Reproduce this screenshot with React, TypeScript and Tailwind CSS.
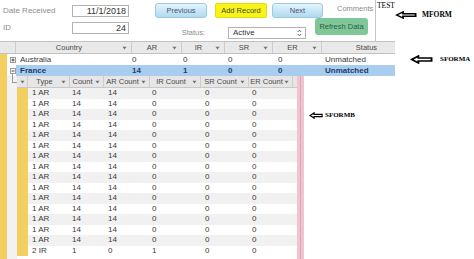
import React from "react";

const DD = () => (
  <svg width="5" height="4" viewBox="0 0 5 4" className="shrink-0">
    <path d="M0.5 0.8 L4.5 0.8 L2.5 3.4 Z" fill="#707070" />
  </svg>
);

const Arrow = ({ w, h }: { w: number; h: number }) => (
  <svg width={w} height={h} viewBox="0 0 22 10" preserveAspectRatio="none" className="shrink-0">
    <polygon
      points="1.6,5 8,1.2 8,3.4 20.6,3.4 20.6,6.6 8,6.6 8,8.8"
      fill="white"
      stroke="black"
      strokeWidth="1.8"
    />
  </svg>
);

const Expander = ({ minus }: { minus?: boolean }) => (
  <svg width="6" height="6" viewBox="0 0 6 6" className="shrink-0">
    <rect x="0.5" y="0.5" width="5" height="5" fill="white" stroke="#9a9a9a" />
    <line x1="1.5" y1="3" x2="4.5" y2="3" stroke="#444" />
    {!minus && <line x1="3" y1="1.5" x2="3" y2="4.5" stroke="#444" />}
  </svg>
);

const outerHeader = [
  { label: "Country", cls: "w-[116px]", dd: true },
  { label: "AR", cls: "w-[50px]", dd: true },
  { label: "IR", cls: "w-[43px]", dd: true },
  { label: "SR", cls: "w-[48px]", dd: true },
  { label: "ER", cls: "w-[49px]", dd: true },
  { label: "Status", cls: "w-[73px] pl-[20px]", dd: false },
];

const outerCells = [
  "w-[116px] pl-[4px]",
  "w-[50px] pl-0",
  "w-[43px] pl-[1px]",
  "w-[48px] pl-[3px]",
  "w-[49px] pl-[5px]",
  "w-[73px] pl-[3px]",
];

const innerCols = [
  { label: "Type", w: "w-[42px]", pad: "pl-[4px]" },
  { label: "Count", w: "w-[34px]", pad: "pl-[2px]" },
  { label: "AR Count", w: "w-[46px]", pad: "pl-[4px]" },
  { label: "IR Count", w: "w-[51px]", pad: "pl-[2px]" },
  { label: "SR Count", w: "w-[48px]", pad: "pl-[4px]" },
  { label: "ER Count", w: "w-[44px]", pad: "pl-[3px]" },
];

const innerRows: string[][] = [
  ...Array.from({ length: 15 }, () => ["1 AR", "14", "14", "0", "0", "0"]),
  ["2 IR", "1", "0", "1", "0", "0"],
];

export default function App() {
  return (
    <div className="w-[474px] h-[259px] overflow-hidden bg-white font-['Liberation_Sans',Arial,sans-serif] text-[#3a3a3a] flex flex-col">
      {/* MFORM */}
      <div className="h-[41px] flex shrink-0">
        <div className="w-[150px] flex flex-col pt-[5px] gap-[5px]">
          <div className="h-[12px] flex items-center">
            <span className="w-[72px] pl-[3px] text-[8px] text-[#8c8c8c] leading-none">Date Received</span>
            <div className="w-[57px] h-[12px] border border-[#b3b3b3] flex items-center justify-end pr-[2px] text-[9px] leading-none text-[#333]">
              11/1/2018
            </div>
          </div>
          <div className="h-[12px] flex items-center">
            <span className="w-[72px] pl-[3px] text-[8px] text-[#8c8c8c] leading-none">ID</span>
            <div className="w-[57px] h-[12px] border border-[#b3b3b3] flex items-center justify-end pr-[2px] text-[9px] leading-none text-[#333]">
              24
            </div>
          </div>
        </div>
        <div className="w-[226px] h-full border-r border-[#c4c4c4] flex flex-col">
          <div className="flex items-start pt-[3px] pl-[5px] h-[18px]">
            <button className="w-[52px] h-[15px] rounded-[3px] border border-[#9ccbe8] bg-gradient-to-b from-[#e4f3fb] to-[#b2d9f1] text-[7.5px] text-[#3d5a72] leading-none">
              Previous
            </button>
            <button className="ml-[8px] w-[52px] h-[15px] rounded-[2px] border border-[#e2dc10] bg-[#f8f419] text-[7.5px] text-[#4a4a30] leading-none">
              Add Record
            </button>
            <button className="ml-[5px] w-[51px] h-[15px] rounded-[3px] border border-[#9ccbe8] bg-gradient-to-b from-[#e4f3fb] to-[#b2d9f1] text-[7.5px] text-[#3d5a72] leading-none">
              Next
            </button>
            <span className="ml-[14px] mt-[1px] text-[7.5px] text-[#8c8c8c] leading-[10px]">Comments</span>
          </div>
          <div className="flex items-start">
            <span className="w-[55px] mt-[10px] text-right text-[7.5px] text-[#8c8c8c] leading-[9px]">Status:</span>
            <div className="ml-[23px] mt-[9px] w-[78px] h-[12px] border border-[#b3b3b3] flex items-center pl-[4px] pr-[3px] text-[8px] leading-none text-[#333]">
              <span className="flex-1">Active</span>
              <svg width="5" height="8" viewBox="0 0 5 8">
                <path d="M0.8 3 L2.5 1.2 L4.2 3" fill="none" stroke="#555" strokeWidth="0.9" />
                <path d="M0.8 5 L2.5 6.8 L4.2 5" fill="none" stroke="#555" strokeWidth="0.9" />
              </svg>
            </div>
            <button className="ml-[9px] w-[53px] h-[17px] rounded-[3px] bg-[#7fc799] text-[7.5px] text-[#2d603e] leading-none">
              Refresh Data
            </button>
          </div>
        </div>
        <div className="flex items-start">
          <span className="pl-[1px] pt-[1px] text-[7.5px] leading-[10px] text-black font-['Liberation_Serif',serif]">TEST</span>
          <div className="mt-[11px]">
            <Arrow w={22} h={8} />
          </div>
          <span className="ml-[5px] mt-[11px] text-[7.5px] leading-[8px] font-bold text-black font-['Liberation_Serif',serif]">MFORM</span>
        </div>
      </div>

      {/* SFORMA header */}
      <div className="h-[13px] w-[395px] flex border-y border-[#c2c2c2] bg-[#e9e9e9] shrink-0 text-[7.5px] text-[#4a4a4a] leading-none">
        <div className="w-[16px] h-full border-r border-[#cdcdcd]" />
        {outerHeader.map((c) => (
          <div key={c.label} className={`${c.cls} h-full flex items-center pr-[4px] ${c.dd ? "border-r border-[#cdcdcd]" : ""}`}>
            <span className="flex-1 text-center">{c.label}</span>
            {c.dd && <DD />}
          </div>
        ))}
      </div>

      {/* Australia row */}
      <div className="h-[11px] flex items-center shrink-0 text-[8px] leading-none">
        <div className="w-[7px] h-full bg-[#f3cf62]" />
        <div className="w-[9px] h-full flex items-center pl-[3px]">
          <Expander />
        </div>
        {["Australia", "0", "0", "0", "0", "Unmatched"].map((v, i) => (
          <div key={i} className={`${outerCells[i]} h-full flex items-center text-[#3a3a3a]`}>
            {v}
          </div>
        ))}
        <div className="ml-[15px] flex items-center">
          <Arrow w={23} h={9} />
          <span className="ml-[7px] text-[7px] font-bold text-black font-['Liberation_Serif',serif]">SFORMA</span>
        </div>
      </div>

      {/* France row */}
      <div className="h-[11px] flex items-center shrink-0 text-[8px] leading-none">
        <div className="w-[7px] h-full bg-[#f3cf62]" />
        <div className="w-[9px] h-full flex items-center pl-[3px] relative">
          <Expander minus />
          <div className="absolute left-[5px] top-[8px] w-px h-[3px] bg-[#9a9a9a]" />
        </div>
        {["France", "14", "1", "0", "0", "Unmatched"].map((v, i) => (
          <div key={i} className={`${outerCells[i]} h-full flex items-center bg-[#a9cdee] text-[#1d3c6b] font-semibold`}>
            {v}
          </div>
        ))}
      </div>

      {/* Sub datasheet area */}
      <div className="flex flex-1 min-h-0">
        <div className="w-[7px] h-full bg-[#f3cf62]" />
        <div className="w-[10px] h-full bg-[#f2f2f2] relative">
          <div className="absolute left-[5px] top-0 w-px h-[6px] bg-[#9a9a9a]" />
          <div className="absolute left-[5px] top-[6px] w-[5px] h-px bg-[#9a9a9a]" />
        </div>
        <div className="w-[280px] flex flex-col">
          <div className="h-[12px] flex bg-[#e6e6e6] border-b border-[#c8c8c8] text-[7.5px] leading-none text-[#4a4a4a]">
            <div className="w-[11px] h-full flex items-center justify-end pr-[2px] border-r border-[#cdcdcd]">
              <DD />
            </div>
            {innerCols.map((c) => (
              <div key={c.label} className={`${c.w} h-full flex items-center pr-[3px] border-r border-[#cdcdcd]`}>
                <span className="flex-1 text-center whitespace-nowrap">{c.label}</span>
                <DD />
              </div>
            ))}
            <div className="w-[4px]" />
          </div>
          {innerRows.map((r, ri) => (
            <div key={ri} className={`h-[10.5px] flex text-[8px] leading-none text-[#3a3a3a] ${ri % 2 === 0 ? "bg-[#f1f1f1]" : "bg-white"}`}>
              <div className="w-[11px] h-full bg-[#f3cf62]" />
              {r.map((v, ci) => (
                <div key={ci} className={`${innerCols[ci].w} ${innerCols[ci].pad} h-full flex items-center whitespace-nowrap`}>
                  {v}
                </div>
              ))}
              <div className="w-[4px]" />
            </div>
          ))}
        </div>
        <div className="w-[7px] h-full bg-[#f2c3d0] flex justify-center">
          <div className="w-px h-full bg-[#d9a9b8]" />
        </div>
        <div className="flex items-start pt-[36px] pl-[5px]">
          <Arrow w={14} h={7} />
          <span className="ml-[2px] mt-[-1px] text-[7px] font-bold text-black font-['Liberation_Serif',serif] leading-[9px]">SFORMB</span>
        </div>
      </div>
    </div>
  );
}
